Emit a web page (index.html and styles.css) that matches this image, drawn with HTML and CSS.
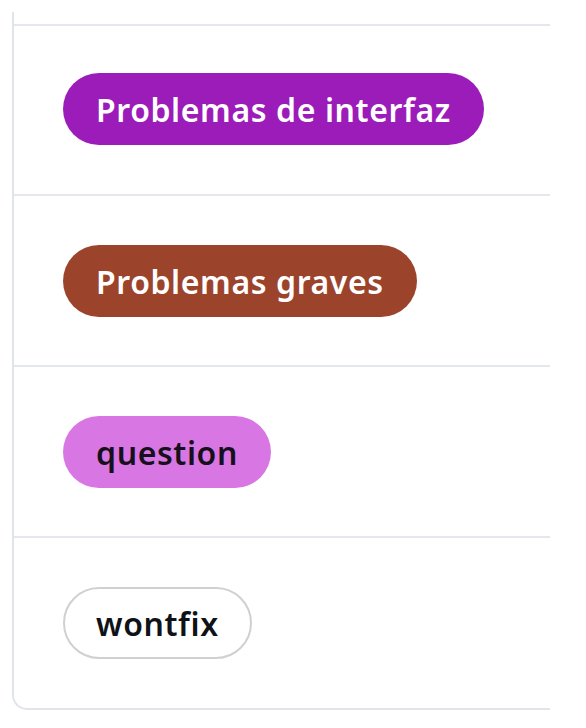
FILE: index.html
```html
<!DOCTYPE html>
<html lang="es">
<head>
<meta charset="utf-8">
<title>Labels</title>
<link rel="stylesheet" href="styles.css">
</head>
<body>
<div class="labels">
  <div class="row"><span class="label label-ui">Problemas de interfaz</span></div>
  <div class="row"><span class="label label-grave">Problemas graves</span></div>
  <div class="row"><span class="label label-question">question</span></div>
  <div class="row"><span class="label label-wontfix">wontfix</span></div>
</div>
</body>
</html>
```

FILE: styles.css
```css
html, body {
  margin: 0;
  padding: 0;
  background: #ffffff;
}

body {
  padding: 12px 36px 0 12px;
  font-family: "Noto Sans", "Open Sans", "Liberation Sans", sans-serif;
}

.labels {
  width: 538px;
  padding-top: 12px;
  border-left: 2.5px solid #e1e5ea;
  border-bottom: 2.5px solid #e1e5ea;
  border-bottom-left-radius: 15px;
  box-sizing: border-box;
}

.row {
  border-top: 2px solid #e4e8ec;
  padding: 49px 0 48px 48.5px;
  display: flex;
  align-items: center;
}

.row:first-child {
  padding-top: 47px;
  padding-bottom: 49px;
}

.row:last-child {
  padding-bottom: 49px;
}

.label {
  display: inline-flex;
  align-items: center;
  box-sizing: border-box;
  height: 72px;
  padding: 2px 31.5px 0;
  border-radius: 36px;
  border: 2.5px solid transparent;
  font-size: 32px;
  font-weight: 600;
  letter-spacing: 0.6px;
  line-height: 1;
  white-space: nowrap;
}

.label-ui {
  background: #9b1cb9;
  color: #ffffff;
}

.label-grave {
  background: #9c432c;
  color: #ffffff;
}

.label-question {
  background: #d876e3;
  color: #16101c;
}

.label-wontfix {
  background: #ffffff;
  border-color: #cfd0d2;
  color: #0f1216;
}
```
